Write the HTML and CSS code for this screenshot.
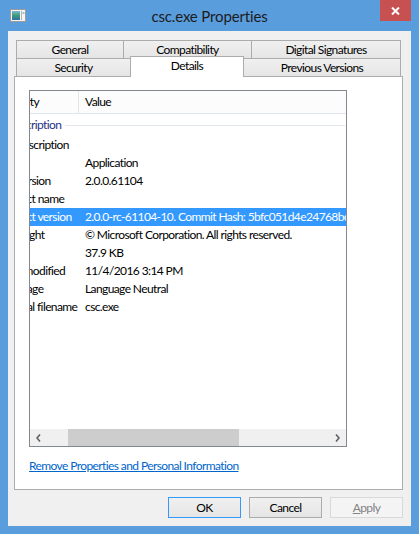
FILE: index.html
```html
<!DOCTYPE html>
<html>
<head>
<meta charset="utf-8">
<title>csc.exe Properties</title>
<link rel="stylesheet" href="styles.css">
</head>
<body>
<div class="window">
  <div class="titlebar">
    <div class="tb-left">
      <svg class="app-icon" width="16" height="13" viewBox="0 0 16 13">
        <defs>
          <linearGradient id="g1" x1="0" y1="0" x2="0" y2="1">
            <stop offset="0" stop-color="#7fb7d6"/>
            <stop offset="0.5" stop-color="#3f9a78"/>
            <stop offset="1" stop-color="#2e6fa6"/>
          </linearGradient>
        </defs>
        <rect x="0.5" y="0.5" width="15" height="12" fill="#f4f4f4" stroke="#9c9c9c"/>
        <rect x="2" y="2" width="8" height="9" fill="url(#g1)"/>
        <rect x="11" y="2" width="1" height="9" fill="#b5b5b5"/>
        <rect x="12.5" y="3" width="2" height="2" fill="#8fc3df"/>
      </svg>
    </div>
    <div class="title">csc.exe Properties</div>
    <div class="tb-right">
      <div class="close">
        <svg width="9" height="8" viewBox="0 0 9 8"><path d="M1 0.5 L8 7.5 M8 0.5 L1 7.5" stroke="#fff" stroke-width="2"/></svg>
      </div>
    </div>
  </div>
  <div class="client">
    <div class="tabs">
      <div class="tabrow">
        <div class="tab t-general">General</div>
        <div class="tab t-compat">Compatibility</div>
        <div class="tab t-digital">Digital Signatures</div>
      </div>
      <div class="tabrow">
        <div class="tab t-security">Security</div>
        <div class="tab t-details sel">Details</div>
        <div class="tab t-prev">Previous Versions</div>
      </div>
    </div>
    <div class="panel">
      <div class="list">
        <div class="lhead">
          <div class="c1 hc1"><span class="off-h">Property</span></div>
          <div class="c2">Value</div>
        </div>
        <div class="group"><span class="off-g">Description</span><div class="gline"></div></div>
        <div class="row"><div class="c1"><span class="off">File description</span></div><div class="c2"></div></div>
        <div class="row"><div class="c1"><span class="off">Type</span></div><div class="c2">Application</div></div>
        <div class="row"><div class="c1"><span class="off">File version</span></div><div class="c2">2.0.0.61104</div></div>
        <div class="row"><div class="c1"><span class="off">Product name</span></div><div class="c2"></div></div>
        <div class="row selrow"><div class="c1"><span class="off">Product version</span></div><div class="c2">2.0.0-rc-61104-10. Commit Hash: 5bfc051d4e24768be0c3a1f2</div></div>
        <div class="row"><div class="c1"><span class="off">Copyright</span></div><div class="c2">© Microsoft Corporation. All rights reserved.</div></div>
        <div class="row"><div class="c1"><span class="off">Size</span></div><div class="c2">37.9 KB</div></div>
        <div class="row"><div class="c1"><span class="off">Date modified</span></div><div class="c2">11/4/2016 3:14 PM</div></div>
        <div class="row"><div class="c1"><span class="off">Language</span></div><div class="c2">Language Neutral</div></div>
        <div class="row"><div class="c1"><span class="off">Original filename</span></div><div class="c2">csc.exe</div></div>
        <div class="spacer"></div>
        <div class="hscroll">
          <div class="arrow">
            <svg width="5" height="8" viewBox="0 0 5 8"><path d="M4 0.5 L1 4 L4 7.5" fill="none" stroke="#606060" stroke-width="1.6"/></svg>
          </div>
          <div class="track"><div class="thumb"></div></div>
          <div class="arrow">
            <svg width="5" height="8" viewBox="0 0 5 8"><path d="M1 0.5 L4 4 L1 7.5" fill="none" stroke="#606060" stroke-width="1.6"/></svg>
          </div>
        </div>
      </div>
      <a class="link" href="#">Remove Properties and Personal Information</a>
    </div>
    <div class="buttons">
      <div class="btn btn-default">OK</div>
      <div class="btn">Cancel</div>
      <div class="btn btn-disabled"><u>A</u>pply</div>
    </div>
  </div>
</div>
</body>
</html>
```
FILE: styles.css
```css
* { box-sizing: border-box; }
html, body { margin: 0; padding: 0; }
body {
  background: #5a9ddd;
  font-family: Lato, "Liberation Sans", Arial, sans-serif;
  font-size: 12px;
  letter-spacing: -0.6px;
  color: #000;
}
.window {
  width: 419px;
  height: 534px;
  display: flex;
  flex-direction: column;
}
.titlebar {
  height: 31px;
  flex: none;
  display: grid;
  grid-template-columns: 1fr auto 1fr;
  align-items: start;
}
.tb-left { padding: 9px 0 0 10px; }
.app-icon { display: block; }
.title {
  font-size: 15px;
  line-height: 20px;
  padding-top: 6px;
  letter-spacing: -0.15px;
  color: #1c1c1c;
}
.tb-right { justify-self: end; padding-right: 8px; }
.close {
  width: 31px;
  height: 21px;
  background: #c75050;
  display: flex;
  align-items: center;
  justify-content: center;
}
.close svg { display: block; margin-top: 1px; }

.client {
  flex: 1;
  margin: 0 8px 8px 8px;
  background: #f0f0f0;
  padding: 9px 8px 8px 6px;
  display: flex;
  flex-direction: column;
}
.tabs {
  margin: 0 2px;
  height: 36px;
  flex: none;
  display: flex;
  flex-direction: column;
}
.tabrow { display: flex; height: 18px; }
.tab {
  height: 18px;
  border: 1px solid #acacac;
  border-bottom: none;
  background: linear-gradient(#f0f0f0, #e5e5e5);
  text-align: center;
  line-height: 17px;
  white-space: nowrap;
}
.tab + .tab { margin-left: -1px; }
.t-general { width: 108px; }
.t-compat { width: 129px; }
.t-digital { width: 150px; }
.t-security { width: 115px; }
.t-details { width: 114px; }
.t-prev { width: 158px; }
.tab.sel {
  position: relative;
  z-index: 2;
  background: #fff;
  height: 21px;
  margin-top: -2px;
  margin-bottom: -1px;
}

.panel {
  flex: none;
  height: 414px;
  background: #fff;
  border: 1px solid #acacac;
  padding: 13px 0 0 14px;
}
.list {
  width: 318px;
  height: 357px;
  border: 1px solid #828790;
  display: flex;
  flex-direction: column;
  overflow: hidden;
  white-space: nowrap;
}
.lhead {
  flex: none;
  height: 23px;
  display: flex;
  background: #fcfcfc;
  border-bottom: 1px solid #e2e7ef;
  line-height: 22px;
}
.c1 {
  width: 49px;
  flex: none;
  overflow: hidden;
}
.hc1 { border-right: 1px solid #e5e5e5; }
.c2 { padding-left: 6px; flex: none; }
.off-h { display: inline-block; margin-left: -32px; }
.off { display: inline-block; margin-left: -32px; }
.group {
  flex: none;
  height: 22px;
  display: flex;
  align-items: center;
  color: #1e3287;
  overflow: hidden;
}
.off-g { display: inline-block; margin-left: -23px; line-height: 22px; }
.gline {
  flex: 1;
  height: 1px;
  background: #e2e7ef;
  margin: 1px 1px 0 4px;
}
.row {
  flex: none;
  height: 18px;
  line-height: 18px;
  display: flex;
}
.selrow { background: #3399ff; color: #fff; }
.spacer { flex: 1; }
.hscroll {
  flex: none;
  height: 17px;
  background: #f0f0f0;
  display: flex;
}
.arrow {
  width: 17px;
  flex: none;
  display: flex;
  align-items: center;
  justify-content: center;
}
.arrow svg { display: block; }
.track { flex: 1; display: flex; }
.thumb {
  margin-left: 21px;
  width: 171px;
  background: #cdcdcd;
}
.link {
  display: inline-block;
  margin-top: 11px;
  line-height: 15px;
  color: #0066cc;
  text-decoration: underline;
}

.buttons {
  flex: none;
  margin-top: 7px;
  display: flex;
  justify-content: flex-end;
  gap: 8px;
}
.btn {
  width: 73px;
  height: 21px;
  border: 1px solid #acacac;
  background: linear-gradient(#f0f0f0, #e5e5e5);
  text-align: center;
  line-height: 19px;
}
.btn-default { border-color: #3399ff; }
.btn-disabled {
  background: #f4f4f4;
  border-color: #d9d9d9;
  color: #838383;
}
.btn-disabled u { text-decoration: underline; }
```
